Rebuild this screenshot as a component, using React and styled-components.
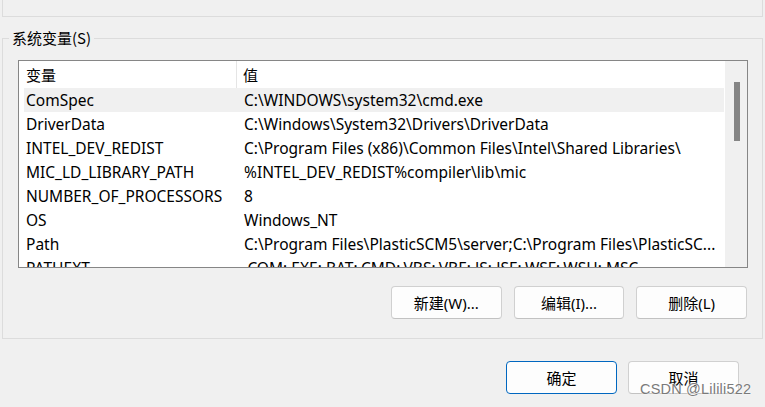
import React from 'react'
import styled, { createGlobalStyle } from 'styled-components'

const GlobalStyle = createGlobalStyle`
    body {
        margin: 0;
        background: #f0f0f0;
        font-family: "Segoe UI", "Noto Sans", "Noto Sans CJK SC", sans-serif;
        color: #000;
    }
`

const Page = styled.div`
    position: relative;
    width: 765px;
    height: 407px;
    overflow: hidden;
    display: flex;
    flex-direction: column;
    background: #f0f0f0;
    font-size: 15.5px;
`

const TopGroup = styled.div`
    height: 16px;
    flex: 0 0 auto;
    margin: 0 2px;
    border: 1px solid #dcdcdc;
    border-top: 0 none;
`

const GroupBox = styled.div`
    position: relative;
    box-sizing: border-box;
    height: 301px;
    flex: 0 0 auto;
    margin: 21px 2px 0;
    padding: 21px 15px 0;
    border: 1px solid #dcdcdc;
    display: flex;
    flex-direction: column;
`

const Legend = styled.span`
    position: absolute;
    left: 6px;
    top: -11px;
    padding: 0 3px;
    line-height: 20px;
    font-size: 15px;
    background: #f0f0f0;
    font-family: "Noto Sans CJK SC", sans-serif;
`

const ListBox = styled.div`
    width: 728px;
    height: 206px;
    flex: 0 0 auto;
    border: 1px solid #868686;
    background: #fff;
    display: flex;
    overflow: hidden;
`

const ListBody = styled.div`
    flex: 1;
    display: flex;
    flex-direction: column;
    overflow: hidden;
`

const HeaderRow = styled.div`
    display: grid;
    grid-template-columns: 217px 1fr;
    height: 27px;
    flex: 0 0 auto;
`

const HeaderCell = styled.div`
    display: flex;
    align-items: center;
    font-size: 15px;
    font-family: "Noto Sans CJK SC", sans-serif;
    border-left: ${({ divider }) => divider ? '1px solid #e5e5e5' : '0 none'};
    padding-left: ${({ divider }) => divider ? '6px' : '7px'};
`

const Row = styled.div`
    display: grid;
    grid-template-columns: 218px 1fr;
    height: 24px;
    flex: 0 0 auto;
    margin-left: 5px;
    align-items: center;
    white-space: nowrap;
    background: ${({ selected }) => selected ? '#f0f0f0' : 'transparent'};
`

const Cell = styled.div`
    padding-left: 2px;
    overflow: hidden;
    line-height: 24px;
`

const ScrollTrack = styled.div`
    width: 22px;
    flex: 0 0 auto;
    background: #f0f0f0;
    border-left: 1px solid #fff;
    padding-top: 21px;
    display: flex;
    justify-content: center;
`

const ScrollThumb = styled.div`
    width: 6px;
    height: 59px;
    margin-left: 1px;
    background: #858585;
`

const ButtonRow = styled.div`
    display: flex;
    gap: 12px;
    margin-top: 18px;
    padding-left: 373px;
`

const Button = styled.button`
    width: 111px;
    height: 33px;
    box-sizing: border-box;
    border: 1px solid ${({ primary }) => primary ? '#0067c0' : '#d0d0d0'};
    border-bottom-color: ${({ primary }) => primary ? '#0067c0' : '#c2c2c2'};
    border-radius: 4px;
    background: #fdfdfd;
    font-family: "Segoe UI", "Noto Sans", "Noto Sans CJK SC", sans-serif;
    font-size: 15px;
    color: #000;
    padding: 0;
`

const Footer = styled.div`
    display: flex;
    justify-content: flex-end;
    gap: 11px;
    margin-top: 22px;
    padding-right: 26px;
`

const Watermark = styled.div`
    position: absolute;
    left: 640px;
    top: 381px;
    font-family: "Liberation Sans", Arial, sans-serif;
    font-size: 14.5px;
    color: #7a7a7a;
    text-shadow: 0 0 2px #fff, 0 0 1px #fff;
    letter-spacing: 0.2px;
    pointer-events: none;
`

const variables = [
    ['ComSpec', 'C:\\WINDOWS\\system32\\cmd.exe'],
    ['DriverData', 'C:\\Windows\\System32\\Drivers\\DriverData'],
    ['INTEL_DEV_REDIST', 'C:\\Program Files (x86)\\Common Files\\Intel\\Shared Libraries\\'],
    ['MIC_LD_LIBRARY_PATH', '%INTEL_DEV_REDIST%compiler\\lib\\mic'],
    ['NUMBER_OF_PROCESSORS', '8'],
    ['OS', 'Windows_NT'],
    ['Path', 'C:\\Program Files\\PlasticSCM5\\server;C:\\Program Files\\PlasticSC...'],
    ['PATHEXT', '.COM;.EXE;.BAT;.CMD;.VBS;.VBE;.JS;.JSE;.WSF;.WSH;.MSC'],
]

export default function App() {
    return (
        <Page>
            <GlobalStyle />
            <TopGroup />
            <GroupBox>
                <Legend>系统变量(S)</Legend>
                <ListBox>
                    <ListBody>
                        <HeaderRow>
                            <HeaderCell>变量</HeaderCell>
                            <HeaderCell divider>值</HeaderCell>
                        </HeaderRow>
                        {variables.map(([name, value], i) => (
                            <Row key={name} selected={i === 0}>
                                <Cell>{name}</Cell>
                                <Cell>{value}</Cell>
                            </Row>
                        ))}
                    </ListBody>
                    <ScrollTrack>
                        <ScrollThumb />
                    </ScrollTrack>
                </ListBox>
                <ButtonRow>
                    <Button>新建(W)...</Button>
                    <Button>编辑(I)...</Button>
                    <Button>删除(L)</Button>
                </ButtonRow>
            </GroupBox>
            <Footer>
                <Button primary>确定</Button>
                <Button>取消</Button>
            </Footer>
            <Watermark>CSDN @Lilili522</Watermark>
        </Page>
    )
}
